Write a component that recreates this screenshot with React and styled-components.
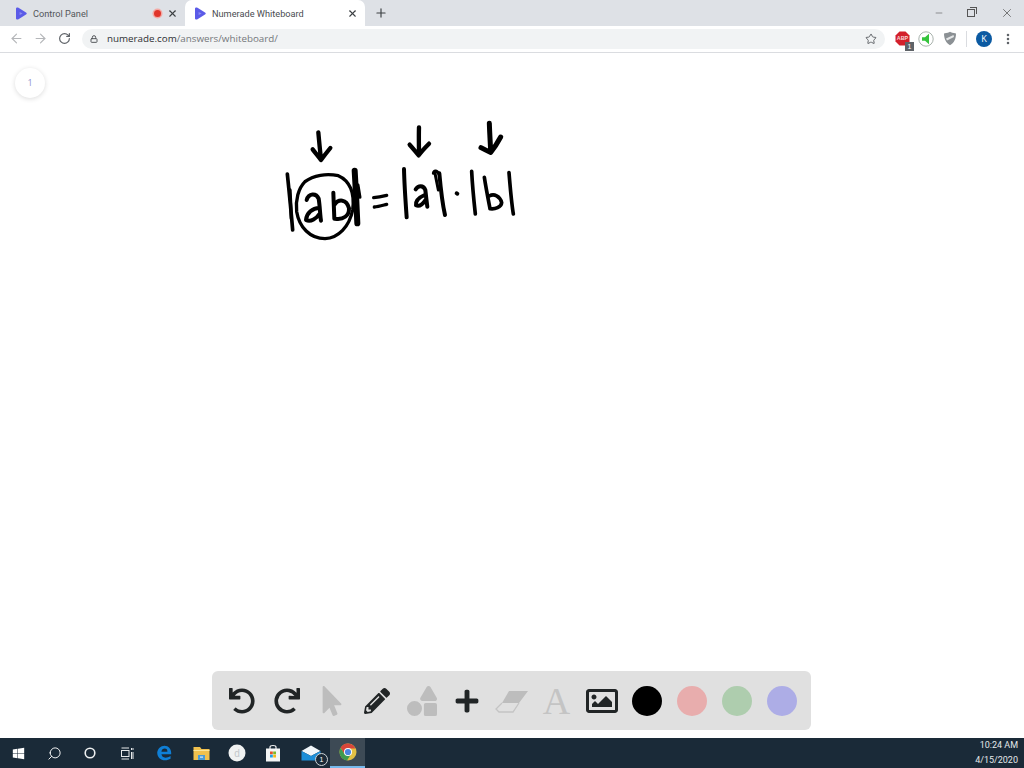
import React from "react"
import styled, { createGlobalStyle } from "styled-components"
import {
    FaUndo, FaRedo, FaMousePointer, FaPencilAlt, FaShapes, FaPlus, FaRegImage, FaWindows
} from "react-icons/fa"
import {
    ArrowLeft, ArrowRight, RotateCw, Lock, Star, X, Plus, Minus, Search, EllipsisVertical
} from "lucide-react"

const GlobalStyle = createGlobalStyle`
    html, body {
        margin: 0;
        padding: 0;
        background: #fff;
        font-family: "Open Sans", "Liberation Sans", sans-serif;
    }
`

const Page = styled.div`
    width: 1024px;
    height: 768px;
    display: flex;
    flex-direction: column;
    overflow: hidden;
`

const TabStrip = styled.div`
    height: 26px;
    flex: none;
    display: flex;
    align-items: stretch;
    background: #dee1e6;
`
const Tab = styled.div`
    width: ${p => (p.$active ? "180px" : "185px")};
    display: flex;
    align-items: center;
    padding: 0 7px 0 ${p => (p.$active ? "9px" : "15px")};
    box-sizing: border-box;
    border-radius: 7px 7px 0 0;
    background: ${p => (p.$active ? "#fff" : "transparent")};
    color: ${p => (p.$active ? "#4a4c50" : "#54565a")};
    font-family: Roboto, "Open Sans", sans-serif;
    font-size: 9.2px;
`
const TabTitle = styled.span`
    flex: 1;
    margin-left: 6px;
    white-space: nowrap;
`
const RecordDot = styled.span`
    width: 7px;
    height: 7px;
    border-radius: 50%;
    background: #e0352b;
    box-shadow: 0 0 0 1.5px #f3a9a4;
    margin-right: 6px;
`
const NewTab = styled.div`
    width: 32px;
    display: flex;
    align-items: center;
    justify-content: center;
    color: #3c4043;
`
const WindowControls = styled.div`
    margin-left: auto;
    display: flex;
    align-items: center;
    color: #555;
`
const WindowButton = styled.div`
    width: 34px;
    height: 24px;
    display: flex;
    align-items: center;
    justify-content: center;
`
const RestoreIcon = styled.div`
    width: 6px;
    height: 6px;
    margin-right: 4px;
    border: 1.2px solid #555;
    position: relative;
    &::after {
        content: "";
        position: absolute;
        top: -3px;
        right: -3px;
        width: 6px;
        height: 6px;
        border-top: 1.2px solid #555;
        border-right: 1.2px solid #555;
    }
`

const ToolBar = styled.div`
    height: 27px;
    flex: none;
    display: flex;
    align-items: center;
    box-sizing: border-box;
    border-bottom: 1px solid #dadce0;
    padding: 0 0 1px 4px;
    color: #5f6368;
`
const NavButton = styled.div`
    width: 24px;
    display: flex;
    justify-content: center;
    color: ${p => (p.$dim ? "#b4b6b9" : "#5f6368")};
`
const Omnibox = styled.div`
    width: 803px;
    height: 20px;
    margin-left: 6px;
    border-radius: 10px;
    background: #f1f3f4;
    display: flex;
    align-items: center;
    box-sizing: border-box;
    padding: 0 8px 0 8px;
    font-size: 9.8px;
`
const Host = styled.span`
    color: #2e3033;
    margin-left: 9px;
`
const UrlPath = styled.span`
    color: #74777b;
`
const StarSlot = styled.div`
    margin-left: auto;
    display: flex;
    color: #55585c;
`
const Extensions = styled.div`
    flex: 1;
    display: flex;
    align-items: center;
    padding-left: 9px;
    gap: 8px;
`
const ExtSlot = styled.div`
    width: 16px;
    height: 16px;
    position: relative;
    display: flex;
    align-items: center;
    justify-content: center;
`
const AbpCount = styled.span`
    position: absolute;
    right: -4px;
    bottom: -4px;
    width: 9px;
    height: 9px;
    background: #5f6368;
    color: #fff;
    font-size: 7px;
    line-height: 9px;
    text-align: center;
    font-family: "Liberation Sans", sans-serif;
`
const Separator = styled.div`
    width: 1px;
    height: 16px;
    background: #dadce0;
`
const Avatar = styled.div`
    width: 16px;
    height: 16px;
    margin-left: 1px;
    border-radius: 50%;
    background: #0b5aa2;
    color: #fff;
    font-size: 9px;
    line-height: 16px;
    text-align: center;
`
const MenuDots = styled.div`
    display: flex;
    margin-left: 1px;
    color: #5f6368;
`

const Canvas = styled.main`
    flex: 1;
    position: relative;
    background: #fff;
`
const PageBadge = styled.div`
    position: absolute;
    left: 15px;
    top: 15px;
    width: 30px;
    height: 30px;
    border-radius: 50%;
    background: #fff;
    box-shadow: 0 1px 5px rgba(0, 0, 0, 0.14);
    color: #8f8fd0;
    font-size: 9px;
    line-height: 30px;
    text-align: center;
`
const Drawing = styled.svg`
    position: absolute;
    left: 270px;
    top: 57px;
    width: 260px;
    height: 140px;
`
const Ink = styled.path`
    fill: none;
    stroke: #000;
    stroke-width: ${p => p.$w || 9};
    stroke-linecap: round;
    stroke-linejoin: round;
`
const Dock = styled.div`
    position: absolute;
    left: 212px;
    top: 618px;
    width: 599px;
    height: 59px;
    box-sizing: border-box;
    padding: 0 7px;
    display: flex;
    align-items: center;
    background: #e0e0e0;
    border-radius: 6px;
`
const DockButton = styled.div`
    width: 45px;
    height: 45px;
    display: flex;
    align-items: center;
    justify-content: center;
    color: ${p => (p.$dim ? "#bdbdbd" : "#212526")};
    font-size: ${p => p.$size || 26}px;
`
const LetterTool = styled.span`
    font-family: "Liberation Serif", serif;
    font-size: 38px;
    color: #c4c4c4;
    line-height: 1;
`
const Swatch = styled.div`
    width: 30px;
    height: 30px;
    border-radius: 50%;
    background: ${p => p.$color};
`

const TaskBar = styled.footer`
    height: 30px;
    flex: none;
    display: flex;
    align-items: center;
    background: #1a2a38;
    color: #fff;
`
const TaskItem = styled.div`
    width: ${p => p.$w || 36}px;
    height: 30px;
    position: relative;
    display: flex;
    align-items: center;
    justify-content: center;
    box-sizing: border-box;
    background: ${p => (p.$active ? "#3d4a55" : "transparent")};
    border-bottom: ${p => (p.$active ? "2px solid #76b9ed" : "none")};
`
const FlippedIcon = styled.span`
    display: flex;
    transform: scaleX(-1);
`
const MailBadge = styled.span`
    position: absolute;
    right: 2px;
    bottom: 2px;
    width: 11px;
    height: 11px;
    border-radius: 50%;
    border: 1px solid #cfd4d8;
    background: #1a2a38;
    font-size: 7px;
    line-height: 11px;
    text-align: center;
    font-family: "Liberation Sans", sans-serif;
`
const Clock = styled.div`
    margin-left: auto;
    padding-right: 6px;
    text-align: right;
    font-family: Roboto, sans-serif;
    font-size: 9px;
    line-height: 15px;
    color: #e4e8ea;
`

const NumeradeLogo = () => (
    <svg width="12" height="13" viewBox="0 0 12 13">
        <path d="M1 1.5 C1 0.5 2.5 0 3.5 0.8 L11 5.5 C12 6.2 12 6.8 11 7.5 L3.5 12.2 C2.5 13 1 12.5 1 11.5 Z" fill="#5b5be8" />
        <path d="M4.6 5 L7.6 6.5 L4.6 8 Z" fill="#8d8df0" />
    </svg>
)

const Eraser = () => (
    <svg width="34" height="24" viewBox="0 0 34 24">
        <path d="M14 2 L33 2 L24 14 L7 14 Z" fill="#bdbdbd" />
        <path d="M7 14 L1 20 L4 23 L18 23 L24 14" fill="none" stroke="#c4c4c4" strokeWidth="1.3" />
    </svg>
)

const AbpIcon = () => (
    <svg width="15" height="15" viewBox="0 0 15 15">
        <path d="M4.5 0.5 H10.5 L14.5 4.5 V10.5 L10.5 14.5 H4.5 L0.5 10.5 V4.5 Z" fill="#d3202b" />
        <text x="7.5" y="9.4" fontSize="5.4" fontWeight="700" textAnchor="middle" fill="#f7d5d5" fontFamily="Liberation Sans">ABP</text>
    </svg>
)

const SoundIcon = () => (
    <svg width="16" height="16" viewBox="0 0 16 16">
        <circle cx="8" cy="8" r="7.2" fill="#fff" stroke="#a9b3ad" />
        <path d="M4 6.2 H7 L11 2.8 V13.2 L7 9.8 H4 Z" fill="#35c43c" />
    </svg>
)

const ShieldIcon = () => (
    <svg width="14" height="15" viewBox="0 0 14 15">
        <path d="M1 2.5 C4 2 6 1.5 7 0.8 C8 1.5 10 2 13 2.5 C13 8 11 12 7 14.2 C3 12 1 8 1 2.5 Z" fill="#8b9094" />
        <path d="M3 7.5 L10.5 4 L11 6 L4 9.5 Z" fill="#e4e6e7" />
    </svg>
)

const EdgeIcon = () => (
    <svg width="20" height="20" viewBox="0 0 18 18">
        <path d="M3 10.2 H14.6 C15 5 12 2.4 8.6 2.4 C5 2.4 2.4 5.2 2 8.6 C2 12.8 5 15.6 9 15.6 C11 15.6 12.6 15 14 14.2 V11.8 C12.4 12.8 11 13.2 9.4 13.2 C7.4 13.2 6 12 5.8 10.2 Z M5.8 7.8 C6 6 7.2 5 8.8 5 C10.4 5 11.2 6 11.2 7.8 Z" fill="#0f7fd6" fillRule="evenodd" />
    </svg>
)

const FolderIcon = () => (
    <svg width="17" height="15" viewBox="0 0 17 15">
        <path d="M0.5 1 H7 L8.5 3 H16.5 V14 H0.5 Z" fill="#f0c14e" />
        <rect x="0.5" y="4" width="16" height="1" fill="#fbe59a" />
        <rect x="5" y="9" width="7" height="5" fill="#4a9bd6" />
        <rect x="7" y="10.5" width="3" height="1.2" fill="#d9ecf8" />
    </svg>
)

const DiscIcon = () => (
    <svg width="18" height="18" viewBox="0 0 18 18">
        <circle cx="9" cy="9" r="8.5" fill="#f0f2f2" />
        <text x="9" y="12.5" fontSize="10" textAnchor="middle" fill="#c3c8cb" fontFamily="Liberation Sans">d</text>
    </svg>
)

const StoreIcon = () => (
    <svg width="16" height="18" viewBox="0 0 16 18">
        <path d="M5 5 V3 C5 1 11 1 11 3 V5" fill="none" stroke="#f2f2f2" strokeWidth="1.2" />
        <rect x="1" y="4.5" width="14" height="13" fill="#f4f5f5" />
        <rect x="5" y="7.5" width="2.8" height="2.8" fill="#e5512a" />
        <rect x="8.2" y="7.5" width="2.8" height="2.8" fill="#7cb82a" />
        <rect x="5" y="10.7" width="2.8" height="2.8" fill="#1f9fe8" />
        <rect x="8.2" y="10.7" width="2.8" height="2.8" fill="#f6b81c" />
    </svg>
)

const MailIcon = () => (
    <svg width="20" height="16" viewBox="0 0 20 16">
        <path d="M0.5 6 L10 0.5 L19.5 6 L10 11 Z" fill="#f1f6fa" />
        <path d="M0.5 6 L10 11 L19.5 6 V15.5 H0.5 Z" fill="#1c8ed8" />
    </svg>
)

const ChromeIcon = () => (
    <svg width="18" height="18" viewBox="0 0 18 18">
        <circle cx="9" cy="9" r="8.5" fill="#e2c044" />
        <path d="M9 .5 A8.5 8.5 0 0 0 1.6 4.8 L5.4 11 L9 5.5 H16.4 A8.5 8.5 0 0 0 9 .5 Z" fill="#d8453a" />
        <path d="M1.6 4.8 A8.5 8.5 0 0 0 8 17.4 L11.8 11.6 L5.4 11 Z" fill="#3f9a4f" />
        <circle cx="9" cy="9" r="4" fill="#fff" />
        <circle cx="9" cy="9" r="3.1" fill="#4a86e0" />
    </svg>
)

const TaskViewIcon = () => (
    <svg width="13" height="13" viewBox="0 0 13 13" fill="none" stroke="#e6e9eb" strokeWidth="1">
        <path d="M0.5 1 H8 M0.5 12 H8" />
        <rect x="0.5" y="3.5" width="7.5" height="6" />
        <path d="M10.5 1 V3 M12 1 V3 M10.5 5 V12 M12 5 V12" />
    </svg>
)

const Handwriting = () => (
    <Drawing viewBox="0 0 780 420">
        {/* arrows */}
        <Ink $w={13} d="M145 67 C147 90 150 120 153 148 M128 118 C137 130 146 140 153 150 C162 138 172 125 181 114" />
        <Ink $w={13} d="M447 52 C446 80 447 110 447 134 M419 104 C430 116 438 127 446 136 C456 122 468 110 477 101" />
        <Ink $w={15} d="M658 40 C659 70 661 100 662 124 M633 113 C642 118 652 123 662 127 C674 112 684 96 692 81" />
        {/* |ab| */}
        <Ink $w={11} d="M52 192 C57 240 63 300 68 360" />
        <Ink $w={10} d="M60 240 L64 325" />
        <Ink $w={10} d="M105 215 C130 195 170 190 205 197 C240 212 255 250 248 300 C238 350 205 384 165 386 C120 386 88 352 80 305 C76 270 85 235 105 215" />
        <Ink $w={12} d="M110 270 C116 250 138 248 146 266 C150 290 150 315 153 332 M148 293 C128 295 110 308 108 330 C122 338 140 325 150 310" />
        <Ink $w={12} d="M190 248 C191 275 192 305 193 326 M193 285 C205 266 230 266 237 295 C238 317 220 330 195 326" />
        <Ink $w={18} d="M254 182 C257 230 260 290 262 340" />
        <Ink $w={9} d="M264 225 L270 262" />
        {/* = */}
        <Ink $w={10} d="M311 263 C325 262 338 259 350 256" />
        <Ink $w={10} d="M313 291 C325 290 338 286 350 283" />
        {/* |a| */}
        <Ink $w={12} d="M402 177 C403 225 407 280 410 322" />
        <Ink $w={12} d="M437 238 C445 226 460 225 466 240 C468 258 470 275 472 290 M464 255 C448 262 436 272 438 286 C450 292 460 280 468 268" />
        <Ink $w={12} d="M508 190 C512 235 517 280 525 315" />
        <Ink $w={9} d="M490 190 C492 180 502 180 508 195 M494 185 L505 240" />
        {/* dot */}
        <Ink $w={12} d="M560 250 L562 251" />
        {/* |b| */}
        <Ink $w={11} d="M605 184 C607 225 612 275 616 312" />
        <Ink $w={11} d="M643 202 C648 235 655 270 660 296 M658 258 C672 250 690 258 695 278 C694 292 675 298 660 296" />
        <Ink $w={11} d="M717 188 C720 225 724 275 730 312" />
    </Drawing>
)

const App = () => {
    return (
        <Page>
            <GlobalStyle />
            <TabStrip>
                <Tab>
                    <NumeradeLogo />
                    <TabTitle>Control Panel</TabTitle>
                    <RecordDot />
                    <X size={11} strokeWidth={2.4} color="#3c4043" />
                </Tab>
                <Tab $active>
                    <NumeradeLogo />
                    <TabTitle>Numerade Whiteboard</TabTitle>
                    <X size={11} strokeWidth={2.4} color="#3c4043" />
                </Tab>
                <NewTab><Plus size={14} strokeWidth={2} /></NewTab>
                <WindowControls>
                    <WindowButton><Minus size={10} strokeWidth={1.4} /></WindowButton>
                    <WindowButton><RestoreIcon /></WindowButton>
                    <WindowButton><X size={14} strokeWidth={1.3} /></WindowButton>
                </WindowControls>
            </TabStrip>
            <ToolBar>
                <NavButton $dim><ArrowLeft size={15} strokeWidth={1.8} /></NavButton>
                <NavButton $dim><ArrowRight size={15} strokeWidth={1.8} /></NavButton>
                <NavButton><RotateCw size={13} strokeWidth={2.2} /></NavButton>
                <Omnibox>
                    <Lock size={8} strokeWidth={3} color="#55585c" />
                    <Host>numerade.com</Host>
                    <UrlPath>/answers/whiteboard/</UrlPath>
                    <StarSlot><Star size={12} strokeWidth={1.8} /></StarSlot>
                </Omnibox>
                <Extensions>
                    <ExtSlot><AbpIcon /><AbpCount>1</AbpCount></ExtSlot>
                    <ExtSlot><SoundIcon /></ExtSlot>
                    <ExtSlot><ShieldIcon /></ExtSlot>
                    <Separator />
                    <Avatar>K</Avatar>
                    <MenuDots><EllipsisVertical size={14} strokeWidth={2.4} /></MenuDots>
                </Extensions>
            </ToolBar>
            <Canvas>
                <PageBadge>1</PageBadge>
                <Handwriting />
                <Dock>
                    <DockButton><FaUndo /></DockButton>
                    <DockButton><FaRedo /></DockButton>
                    <DockButton $dim><FaMousePointer size={30} /></DockButton>
                    <DockButton><FaPencilAlt /></DockButton>
                    <DockButton $dim><FaShapes size={30} /></DockButton>
                    <DockButton><FaPlus /></DockButton>
                    <DockButton $dim><Eraser /></DockButton>
                    <DockButton><LetterTool>A</LetterTool></DockButton>
                    <DockButton><FaRegImage size={32} /></DockButton>
                    <DockButton><Swatch $color="#000" /></DockButton>
                    <DockButton><Swatch $color="#e8adad" /></DockButton>
                    <DockButton><Swatch $color="#aecdae" /></DockButton>
                    <DockButton><Swatch $color="#adadE6" /></DockButton>
                </Dock>
            </Canvas>
            <TaskBar>
                <TaskItem><FaWindows size={13} /></TaskItem>
                <TaskItem><FlippedIcon><Search size={15} strokeWidth={1.5} /></FlippedIcon></TaskItem>
                <TaskItem>
                    <svg width="12" height="12" viewBox="0 0 12 12"><circle cx="6" cy="6" r="4.8" fill="none" stroke="#eef0f1" strokeWidth="1.6" /></svg>
                </TaskItem>
                <TaskItem $w={39}><TaskViewIcon /></TaskItem>
                <TaskItem><EdgeIcon /></TaskItem>
                <TaskItem><FolderIcon /></TaskItem>
                <TaskItem><DiscIcon /></TaskItem>
                <TaskItem><StoreIcon /></TaskItem>
                <TaskItem $w={39}><MailIcon /><MailBadge>1</MailBadge></TaskItem>
                <TaskItem $w={35} $active><ChromeIcon /></TaskItem>
                <Clock>10:24 AM<br />4/15/2020</Clock>
            </TaskBar>
        </Page>
    )
}

export default App
